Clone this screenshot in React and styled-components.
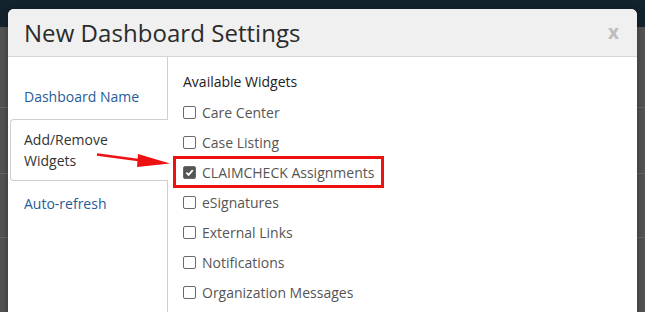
import styled, { createGlobalStyle } from 'styled-components';

const GlobalStyle = createGlobalStyle`
  html, body {
    margin: 0;
    padding: 0;
    background: #4f4f4f;
    font-family: "Open Sans", "Liberation Sans", sans-serif;
    overflow: hidden;
  }
`;

const Page = styled.div`
  position: relative;
  width: 645px;
  height: 312px;
  overflow: hidden;
`;

const TopBar = styled.div`
  height: 27px;
  background: #13232e;
`;

const BackRow = styled.div`
  height: ${(p) => p.h}px;
  border-bottom: 1px solid #666;
  background: #525252;
`;

const Modal = styled.div`
  position: absolute;
  left: 8px;
  top: 9px;
  width: 629px;
  height: 340px;
  background: #fff;
  border-radius: 6px 6px 0 0;
  overflow: hidden;
  box-shadow: 0 0 6px rgba(0, 0, 0, 0.35);
`;

const Header = styled.div`
  height: 47px;
  background: #f0f0f0;
  border-bottom: 1px solid #d6d6d6;
  display: flex;
  align-items: center;
  justify-content: space-between;
  padding: 0 16px;
`;

const Title = styled.h1`
  margin: 0;
  font-size: 24px;
  font-weight: 400;
  color: #2b2b2b;
  letter-spacing: 0.05px;
`;

const Close = styled.span`
  font-size: 19px;
  font-weight: 700;
  color: #bdbdbd;
  margin-right: 2px;
  margin-top: -2px;
`;

const Body = styled.div`
  display: flex;
  height: 292px;
`;

const Nav = styled.div`
  width: 157px;
  padding: 19px 0 0 2px;
  border-right: 1px solid #cfcfcf;
  display: flex;
  flex-direction: column;
`;

const Tab = styled.div`
  font-size: 14px;
  line-height: 21px;
  padding: 9px 10px 9px 13px;
  margin-bottom: 2px;
  margin-right: ${(p) => (p.$active ? '-1px' : '0')};
  border: 1px solid ${(p) => (p.$active ? '#cfcfcf' : 'transparent')};
  border-right: none;
  border-radius: 4px 0 0 4px;
  background: #fff;
  color: ${(p) => (p.$active ? '#333' : '#1f5c99')};
  position: relative;
`;

const Content = styled.div`
  flex: 1;
  padding: 14px 0 0 15px;
  position: relative;
`;

const Heading = styled.div`
  font-size: 14px;
  line-height: 21px;
  color: #222;
  margin-bottom: 5px;
`;

const Item = styled.label`
  display: flex;
  align-items: center;
  gap: 6px;
  height: 30px;
  font-size: 14px;
  color: #555;
  box-sizing: border-box;
  width: fit-content;
  ${(p) =>
    p.$highlight &&
    `
    height: 32px;
    margin: -1px 0 -1px -10px;
    padding: 0 7px 0 7px;
    border: 3px solid #ee1111;
  `}
`;

const Box = styled.span`
  width: 13px;
  height: 13px;
  box-sizing: border-box;
  border: 1px solid #6a6a6a;
  border-radius: 2px;
  background: ${(p) => (p.$checked ? '#555' : '#fff')};
  display: flex;
  align-items: center;
  justify-content: center;
  flex-shrink: 0;
`;

const Arrow = styled.svg`
  position: absolute;
  left: 90px;
  top: 145px;
  overflow: visible;
`;

const widgets = [
  { name: 'Care Center' },
  { name: 'Case Listing' },
  { name: 'CLAIMCHECK Assignments', checked: true },
  { name: 'eSignatures' },
  { name: 'External Links' },
  { name: 'Notifications' },
  { name: 'Organization Messages' },
];

export default function App() {
  return (
    <Page>
      <GlobalStyle />
      <TopBar />
      <BackRow h={80} />
      <BackRow h={65} />
      <BackRow h={63} />
      <BackRow h={75} />
      <Modal>
        <Header>
          <Title>New Dashboard Settings</Title>
          <Close>x</Close>
        </Header>
        <Body>
          <Nav>
            <Tab>Dashboard Name</Tab>
            <Tab $active>
              Add/Remove
              <br />
              Widgets
            </Tab>
            <Tab>Auto-refresh</Tab>
          </Nav>
          <Content>
            <Heading>Available Widgets</Heading>
            {widgets.map((w) => (
              <Item key={w.name} $highlight={w.checked}>
                <Box $checked={w.checked}>
                  {w.checked && (
                    <svg width="9" height="9" viewBox="0 0 10 10">
                      <path d="M1.5 5.2 L4 7.6 L8.6 2.3" fill="none" stroke="#fff" strokeWidth="2" />
                    </svg>
                  )}
                </Box>
                {w.name}
              </Item>
            ))}
          </Content>
        </Body>
      </Modal>
      <Arrow width="90" height="30" viewBox="0 0 90 30">
        <line x1="7" y1="9.5" x2="52" y2="15.5" stroke="#ee1111" strokeWidth="2.5" />
        <polygon points="48,9 80,18.5 47,22" fill="#ee1111" />
      </Arrow>
    </Page>
  );
}
